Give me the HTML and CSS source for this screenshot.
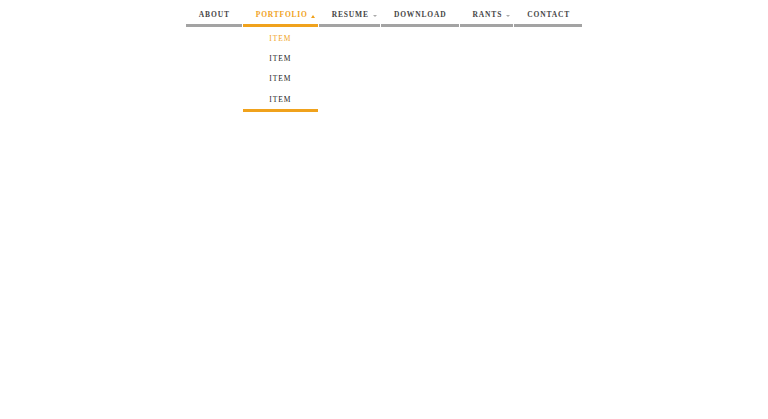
FILE: index.html
```html
<!DOCTYPE html>
<html>
<head>
<meta charset="utf-8">
<link rel="stylesheet" href="styles.css">
</head>
<body>
<nav class="menu">
  <ul class="nav">
    <li class="nav-item"><a class="nav-link" href="#">About</a></li>
    <li class="nav-item active has-sub"><a class="nav-link" href="#">Portfolio<span class="arrow up"></span></a>
      <div class="sub">
        <a class="sub-link current" href="#">Item</a>
        <a class="sub-link" href="#">Item</a>
        <a class="sub-link" href="#">Item</a>
        <a class="sub-link" href="#">Item</a>
      </div>
    </li>
    <li class="nav-item has-sub"><a class="nav-link" href="#">Resume<span class="arrow down"></span></a></li>
    <li class="nav-item"><a class="nav-link" href="#">Download</a></li>
    <li class="nav-item has-sub"><a class="nav-link" href="#">Rants<span class="arrow down"></span></a></li>
    <li class="nav-item"><a class="nav-link" href="#">Contact</a></li>
  </ul>
</nav>
</body>
</html>
```
FILE: styles.css
```css
html, body {
  margin: 0;
  padding: 0;
  background: #fff;
}
body {
  font-family: "Liberation Serif", "DejaVu Serif", serif;
}
.menu {
  display: block;
}
.nav {
  list-style: none;
  margin: 0;
  padding: 0;
  display: flex;
  justify-content: center;
  align-items: flex-start;
  gap: 1px;
}
.nav-item {
  display: flex;
  flex-direction: column;
}
.nav-link {
  display: flex;
  align-items: center;
  padding: 5px 12px 0 13px;
  height: 19px;
  border-bottom: 3px solid #a3a3a3;
  font-size: 7.5px;
  font-weight: bold;
  letter-spacing: 0.85px;
  text-transform: uppercase;
  color: #454545;
  text-decoration: none;
}
.has-sub .nav-link {
  padding-right: 3px;
}
.nav-item.active .nav-link {
  color: #f0a21c;
  border-bottom-color: #f0a21c;
  letter-spacing: 0.8px;
  padding-right: 3px;
}
.arrow {
  display: inline-block;
  width: 0;
  height: 0;
  margin-left: 4px;
  border-left: 2.5px solid transparent;
  border-right: 2.5px solid transparent;
}
.arrow.up {
  border-bottom: 3px solid #f0a21c;
  margin-top: 3px;
  margin-left: 3px;
}
.arrow.down {
  border-top: 2px solid #aaa;
  margin-top: 3px;
}
.sub {
  display: flex;
  flex-direction: column;
  padding-top: 0.5px;
  border-bottom: 3px solid #f0a21c;
  background: #fff;
}
.sub-link {
  display: block;
  text-align: center;
  height: 20.4px;
  line-height: 21px;
  font-size: 7.5px;
  letter-spacing: 0.9px;
  text-transform: uppercase;
  color: #222;
  text-decoration: none;
}
.sub-link.current {
  color: #f0a21c;
}
```
